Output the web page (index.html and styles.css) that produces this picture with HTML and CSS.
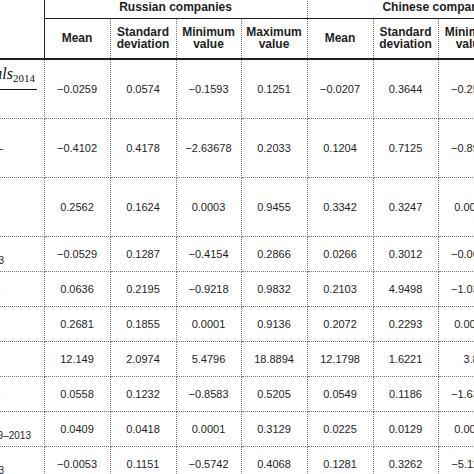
FILE: index.html
```html
<!DOCTYPE html>
<html>
<head>
<meta charset="utf-8">
<link rel="stylesheet" href="styles.css">
</head>
<body>
<table class="stats">
  <colgroup>
    <col class="c-label"><col class="c66"><col class="c66"><col class="c65"><col class="c66"><col class="c66"><col class="c65"><col class="c66"><col class="c66">
  </colgroup>
  <thead>
    <tr class="h1">
      <th class="corner" rowspan="2"></th>
      <th class="group grp-ru" colspan="4">Russian companies</th>
      <th class="group" colspan="4">Chinese companies</th>
    </tr>
    <tr class="h2">
      <th>Mean</th><th>Standard deviation</th><th>Minimum value</th><th>Maximum value</th>
      <th>Mean</th><th>Standard deviation</th><th>Minimum value</th><th>Maximum value</th>
    </tr>
  </thead>
  <tbody>
    <tr class="tall">
      <td class="lab"><div class="lbl p7"><span class="frac"><span class="num"><i>Totals</i><sub>2015</sub> − <i>Totals</i><sub>2014</sub></span><span class="den"><i>Totals</i><sub>2014</sub></span></span></div></td>
      <td>−0.0259</td><td>0.0574</td><td>−0.1593</td><td>0.1251</td><td>−0.0207</td><td>0.3644</td><td>−0.2541</td><td>1.2846</td>
    </tr>
    <tr class="tall">
      <td class="lab"><div class="lbl p41"><span class="mark">Leverage –</span></div></td>
      <td>−0.4102</td><td>0.4178</td><td>−2.63678</td><td>0.2033</td><td>0.1204</td><td>0.7125</td><td>−0.8934</td><td>2.9471</td>
    </tr>
    <tr class="tall">
      <td class="lab"><div class="lbl off">Share of exports</div></td>
      <td>0.2562</td><td>0.1624</td><td>0.0003</td><td>0.9455</td><td>0.3342</td><td>0.3247</td><td>0.0003</td><td>0.9987</td>
    </tr>
    <tr class="short">
      <td class="lab"><div class="lbl p40 sub-row">Growth<sub>2009–2013</sub></div></td>
      <td>−0.0529</td><td>0.1287</td><td>−0.4154</td><td>0.2866</td><td>0.0266</td><td>0.3012</td><td>−0.0614</td><td>0.9822</td>
    </tr>
    <tr class="short">
      <td class="lab"><div class="lbl off">ROA</div></td>
      <td>0.0636</td><td>0.2195</td><td>−0.9218</td><td>0.9832</td><td>0.2103</td><td>4.9498</td><td>−1.0376</td><td>9.8813</td>
    </tr>
    <tr class="short">
      <td class="lab"><div class="lbl off">Fixed assets</div></td>
      <td>0.2681</td><td>0.1855</td><td>0.0001</td><td>0.9136</td><td>0.2072</td><td>0.2293</td><td>0.0001</td><td>0.9412</td>
    </tr>
    <tr class="short">
      <td class="lab"><div class="lbl off">ln(Assets)</div></td>
      <td>12.149</td><td>2.0974</td><td>5.4796</td><td>18.8894</td><td>12.1798</td><td>1.6221</td><td>3.8</td><td>17.2204</td>
    </tr>
    <tr class="short">
      <td class="lab"><div class="lbl off">Profitability</div></td>
      <td>0.0558</td><td>0.1232</td><td>−0.8583</td><td>0.5205</td><td>0.0549</td><td>0.1186</td><td>−1.6345</td><td>0.7712</td>
    </tr>
    <tr class="short">
      <td class="lab"><div class="lbl p13 sub-row">Volatility<sub>2009–2013</sub></div></td>
      <td>0.0409</td><td>0.0418</td><td>0.0001</td><td>0.3129</td><td>0.0225</td><td>0.0129</td><td>0.0001</td><td>0.1958</td>
    </tr>
    <tr class="short">
      <td class="lab"><div class="lbl p40 sub-row">Δ Margin<sub>2009–2013</sub></div></td>
      <td>−0.0053</td><td>0.1151</td><td>−0.5742</td><td>0.4068</td><td>0.1281</td><td>0.3262</td><td>−5.1123</td><td>2.8841</td>
    </tr>
  </tbody>
</table>
</body>
</html>
```

FILE: styles.css
```css
html, body {
  margin: 0;
  padding: 0;
  background: #ffffff;
  overflow: hidden;
}

.stats {
  margin-top: -6px;
  border-collapse: collapse;
  table-layout: fixed;
  width: 570px;
  font-family: "Liberation Sans", Arial, sans-serif;
  font-size: 11px;
  color: #1e1e1e;
}

.c-label { width: 44px; }
.c66 { width: 66px; }
.c65 { width: 65px; }

.stats th,
.stats td {
  padding: 0;
  text-align: center;
  vertical-align: middle;
}

.stats th {
  font-weight: bold;
  font-size: 12px;
  line-height: 12.5px;
}

.h1 th { height: 24px; }
.h2 th { height: 38.5px; }

.corner {
  border-right: 1px solid #222;
  border-bottom: 2px solid #222;
}

.stats th.group {
  border-bottom: 1px solid #222;
  white-space: nowrap;
  overflow: hidden;
  vertical-align: top;
  padding-top: 7px;
  height: 17px;
}

.stats th.grp-ru { border-right: 1px dotted #777; }

.h2 th {
  border-bottom: 2px solid #222;
  border-right: 1px dotted #777;
}

.stats td {
  border-bottom: 1px dotted #777;
  border-right: 1px dotted #777;
  white-space: nowrap;
  overflow: hidden;
}

.tall td { height: 58px; }
.short td { height: 34px; }

.lab { text-align: right; }

.lbl {
  display: flex;
  justify-content: flex-end;
  align-items: center;
  white-space: nowrap;
  overflow: hidden;
  width: 44px;
  box-sizing: border-box;
}

.p7 { padding-right: 7px; }
.p13 { padding-right: 13px; }
.p40 { padding-right: 40px; }
.p41 { padding-right: 41px; }
.off { padding-right: 60px; }

.sub-row {
  padding-top: 13px;
}

.sub-row sub {
  font-size: 10px;
  vertical-align: baseline;
}

.frac {
  display: inline-flex;
  flex-direction: column;
  align-items: center;
  font-family: "Liberation Serif", "Times New Roman", serif;
  font-size: 16px;
  color: #111;
}

.frac .num {
  border-bottom: 1px solid #111;
  padding: 0 2px 2px 0;
  line-height: 18px;
}

.frac .den { line-height: 18px; }

.frac sub {
  font-size: 11px;
  font-style: normal;
  vertical-align: -3px;
}

.mark { font-size: 11px; }
```
